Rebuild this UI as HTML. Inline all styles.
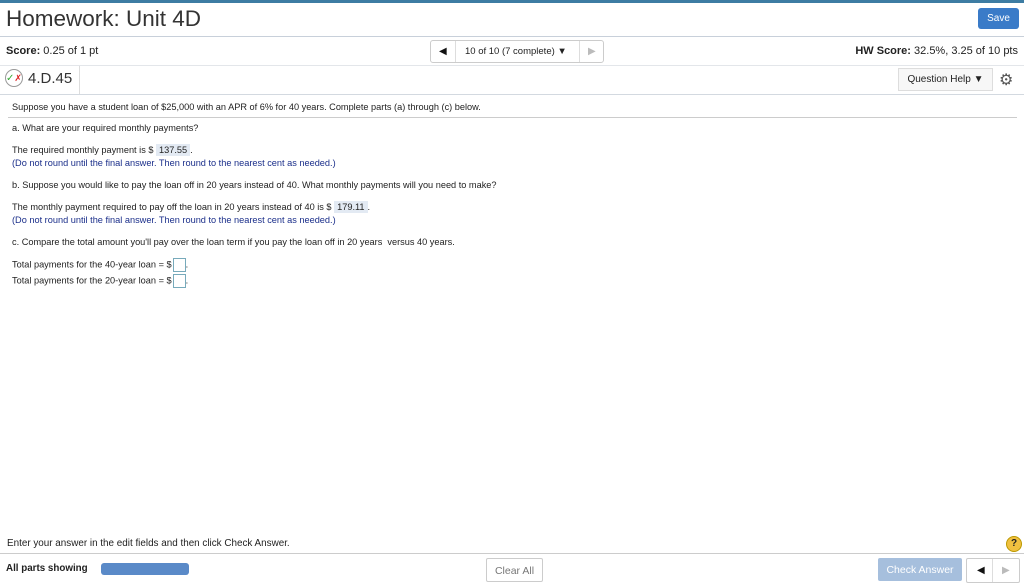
<!DOCTYPE html>
<html><head><style>
body{margin:0;width:1024px;height:584px;position:relative;font-family:"Liberation Sans",Arial,sans-serif;background:#fff;overflow:hidden;color:#222}
.a{position:absolute;white-space:nowrap}
.hl{position:absolute;left:0;right:0;height:1px;background:#d3d9e0}
.t{font-size:9.2px}
.ans{background:#e3eaf3;padding:1px 3px}
.box{display:inline-block;width:11px;height:12px;border:1px solid #7ab;vertical-align:middle;margin-left:1px}
.blue{color:#1a2e8a}
</style></head><body>
<div class="a" style="left:0;top:0;width:1024px;height:3px;background:#3d7ca3"></div>
<div class="a" style="left:6px;top:6px;font-size:22.5px;color:#333">Homework: Unit 4D</div>
<div class="a" style="left:978px;top:8px;width:41px;height:21px;background:#3a7bc8;border-radius:3px;color:#fff;font-size:10px;text-align:center;line-height:22px">Save</div>
<div class="hl" style="top:36px;background:#c8d0da"></div>
<div class="a" style="left:6px;top:45px;font-size:11px"><b>Score:</b> 0.25 of 1 pt</div>
<div class="a" style="left:430px;top:40px;width:172px;height:21px;border:1px solid #ccc;border-radius:3px;font-size:9.5px;line-height:22px">
<span class="a" style="left:8px;top:0;font-size:10px;color:#111">◀</span>
<span class="a" style="left:24px;top:0;height:21px;border-left:1px solid #ddd"></span>
<span class="a" style="left:34px;top:0">10 of 10 (7 complete) ▼</span>
<span class="a" style="left:148px;top:0;height:21px;border-left:1px solid #ddd"></span>
<span class="a" style="left:157px;top:0;color:#bbb;font-size:10px">▶</span></div>
<div class="a" style="right:6px;top:45px;font-size:11px"><b>HW Score:</b> 32.5%, 3.25 of 10 pts</div>
<div class="hl" style="top:65px;background:#e3e6ea"></div>
<div class="a" style="left:5px;top:69px;width:16px;height:16px;border:1px solid #999;border-radius:50%;font-size:10px;line-height:16px;text-align:center"><span style="color:#3a3">✓</span><span style="color:#d22;font-size:9px">✗</span></div>
<div class="a" style="left:28px;top:70px;font-size:15px;color:#333">4.D.45</div>
<div class="a" style="left:79px;top:66px;width:1px;height:28px;background:#ddd"></div>
<div class="a" style="left:898px;top:68px;width:93px;height:21px;border:1px solid #ddd;background:#f7f7f7;font-size:10px;line-height:22px;text-align:center">Question Help ▼</div>
<div class="a" style="left:999px;top:70px;font-size:16px;color:#555">⚙</div>
<div class="hl" style="top:94px;background:#d3d9e0"></div>
<div class="a t" style="left:12px;top:102px">Suppose you have a student loan of $25,000 with an APR of 6% for 40 years. Complete parts (a) through (c) below.</div>
<div class="a" style="left:8px;top:117px;width:1009px;height:1px;background:#ccc"></div>
<div class="a t" style="left:12px;top:123px">a. What are your required monthly payments?</div>
<div class="a t" style="left:12px;top:145px">The required monthly payment is $ <span class="ans">137.55</span>.</div>
<div class="a t blue" style="left:12px;top:158px">(Do not round until the final answer. Then round to the nearest cent as needed.)</div>
<div class="a t" style="left:12px;top:180px">b. Suppose you would like to pay the loan off in 20 years instead of 40. What monthly payments will you need to make?</div>
<div class="a t" style="left:12px;top:202px">The monthly payment required to pay off the loan in 20 years instead of 40 is $ <span class="ans">179.11</span>.</div>
<div class="a t blue" style="left:12px;top:215px">(Do not round until the final answer. Then round to the nearest cent as needed.)</div>
<div class="a t" style="left:12px;top:237px">c. Compare the total amount you'll pay over the loan term if you pay the loan off in 20 years &nbsp;versus 40 years.</div>
<div class="a t" style="left:12px;top:258px">Total payments for the 40-year loan = $<span class="box"></span>.</div>
<div class="a t" style="left:12px;top:274px">Total payments for the 20-year loan = $<span class="box"></span>.</div>
<div class="a" style="left:7px;top:538px;font-size:9.9px">Enter your answer in the edit fields and then click Check Answer.</div>
<div class="a" style="left:1006px;top:536px;width:14px;height:14px;border-radius:50%;background:#f0c040;border:1px solid #b90;font-size:10px;font-weight:bold;text-align:center;line-height:14px">?</div>
<div class="hl" style="top:553px;background:#ccc"></div>
<div class="a" style="left:6px;top:563px;font-size:9.8px;font-weight:bold">All parts showing</div>
<div class="a" style="left:101px;top:563px;width:88px;height:12px;border-radius:3px;background:#5a8ac8"></div>
<div class="a" style="left:486px;top:558px;width:55px;height:22px;border:1px solid #ccc;border-radius:2px;font-size:10.5px;color:#777;text-align:center;line-height:24px">Clear All</div>
<div class="a" style="left:878px;top:558px;width:84px;height:23px;background:#a6bfdd;border-radius:2px;color:#fff;font-size:10.5px;text-align:center;line-height:24px">Check Answer</div>
<div class="a" style="left:966px;top:558px;width:52px;height:23px;border:1px solid #ccc;border-radius:2px;font-size:10px;line-height:23px">
<span class="a" style="left:10px;top:0;color:#111">◀</span><span class="a" style="left:25px;top:0;height:23px;border-left:1px solid #ddd"></span><span class="a" style="left:35px;top:0;color:#bbb">▶</span></div>
</body></html>
